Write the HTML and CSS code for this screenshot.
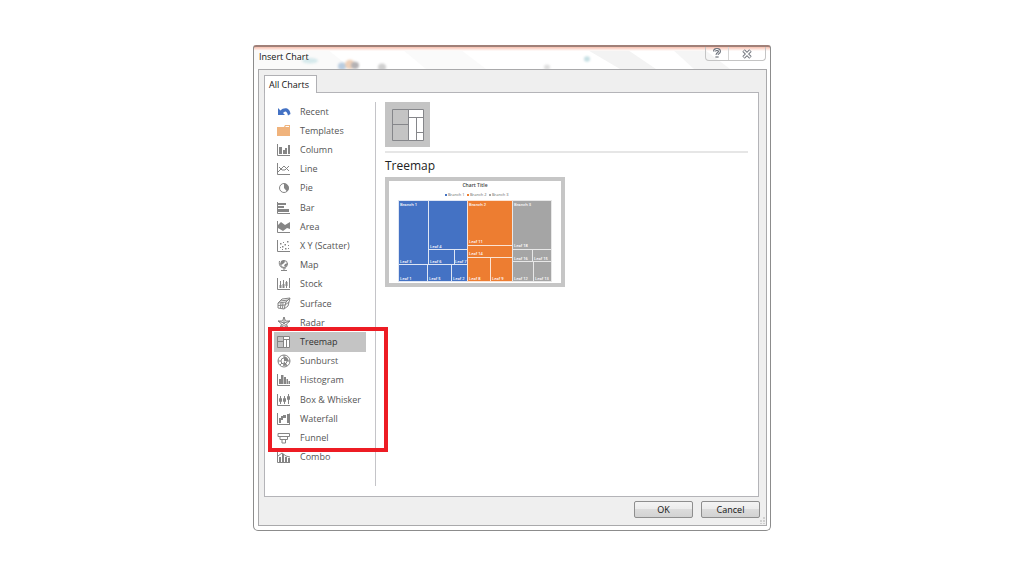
FILE: index.html
```html
<!DOCTYPE html>
<html lang="en">
  <head>
    <meta charset="utf-8">
    <title>Insert Chart</title>
    <link rel="stylesheet" href="styles.css">
  </head>
  <body>
    <div class="dialog" role="dialog" aria-labelledby="dialog-title">
      <header class="title-bar">
        <svg class="glass" viewBox="0 0 516 24" preserveAspectRatio="none" aria-hidden="true">
          <path d="M0 4H75L98 24H0z" fill="#fafafa" />
          <path d="M150 4H208L232 24H172z" fill="#fafafa" />
          <path d="M335 4H375L402 24H366z" fill="#f3f3f3" />
          <path d="M420 4H452L476 24H440z" fill="#f5f5f5" />
          <g class="smudge">
            <ellipse cx="56" cy="15" rx="8" ry="3" fill="#d5e9ec" />
            <circle cx="88" cy="21" r="4" fill="#b9cce0" />
            <circle cx="96" cy="19" r="5" fill="#efd0b8" />
            <circle cx="101" cy="20" r="4" fill="#b5b2b4" />
            <circle cx="128" cy="22" r="4" fill="#d0d0d0" />
            <circle cx="293" cy="22" r="3" fill="#e0e0e0" />
            <circle cx="333" cy="13" r="3" fill="#c6dfe4" />
          </g>
        </svg>
        <h1 class="title" id="dialog-title">Insert Chart</h1>
        <div class="caption-btns">
          <button class="caption-btn" type="button" aria-label="Help">
            <svg width="10" height="11" viewBox="0 0 10 11" fill="none">
              <path d="M2.5 3.5C2.5 .8 7.5 .8 7.5 3.5C7.5 5.2 5 5 5 7M5 8.3V9.8" stroke="#70757e" stroke-width="3" />
              <path d="M2.5 3.5C2.5 .8 7.5 .8 7.5 3.5C7.5 5.2 5 5 5 7M5 8.6V9.4" stroke="#fff" />
            </svg>
          </button>
          <button class="caption-btn close-btn" type="button" aria-label="Close">
            <svg width="12" height="10" viewBox="0 0 12 10" fill="none">
              <path d="M2.5 1.5L9.5 8.5M9.5 1.5L2.5 8.5" stroke="#777b82" stroke-width="3.4" />
              <path d="M2.8 1.8L9.2 8.2M9.2 1.8L2.8 8.2" stroke="#fff" stroke-width="1.4" />
            </svg>
          </button>
        </div>
      </header>

      <div class="client">
        <div class="tabs" role="tablist">
          <button class="tab" type="button" role="tab" aria-selected="true">All Charts</button>
        </div>

        <div class="pane">
          <nav class="chart-nav">
            <ul class="chart-list">
              <li><button class="chart-type" type="button">
                <svg class="icon" viewBox="0 0 14 14"><path d="M1 3V10H8L6 8C8 5.500 10 6 11 10.500L13.500 9C13 2.500 7 1.500 3.500 5.500z" fill="#4472c4" /></svg>
                Recent</button></li>
              <li><button class="chart-type" type="button">
                <svg class="icon" viewBox="0 0 14 14"><path d="M0 3H7L8 1H13V12H0z" fill="#f0b37c" /><path d="M8.500 2.500H12" stroke="#fff" /></svg>
                Templates</button></li>
              <li><button class="chart-type" type="button">
                <svg class="icon" viewBox="0 0 14 14"><path class="line" d="M.5 1V12.500H13" /><path class="fill" d="M2 4H5V11H2zM6 7H8V11H6zM8 5H10V11H8zM11 2H13V11H11z" /></svg>
                Column</button></li>
              <li><button class="chart-type" type="button">
                <svg class="icon" viewBox="0 0 14 14"><path class="line" d="M.5 1V12.500H13M1 10L7 4L12 9M2 5L5 8L8 8L12 4" /></svg>
                Line</button></li>
              <li><button class="chart-type" type="button">
                <svg class="icon" viewBox="0 0 14 14"><circle class="line" cx="7" cy="7" r="4.500" /><path class="fill" d="M7 7V2.500A4.500 4.500 0 0 1 10 10.500z" /></svg>
                Pie</button></li>
              <li><button class="chart-type" type="button">
                <svg class="icon" viewBox="0 0 14 14"><path class="line" d="M.5 1V12.500H13" /><path class="fill" d="M1 2H9V4H1zM1 5H7V7H1zM1 8H12V11H1z" /></svg>
                Bar</button></li>
              <li><button class="chart-type" type="button">
                <svg class="icon" viewBox="0 0 14 14"><path class="line" d="M.5 1V12.500H13" /><path class="fill" d="M1 5L4 2L8 5L13 2V9L10 8L6 11L1 8z" /></svg>
                Area</button></li>
              <li><button class="chart-type" type="button">
                <svg class="icon" viewBox="0 0 14 14"><path class="line" d="M.5 1V12.500H13" /><path class="fill" d="M3 4H4.500V5.500H3zM6 3H7V4H6zM10 2H11.500V3.500H10zM7.500 5H9V6.500H7.500zM11 6H12V7H11zM3 8H4V9H3zM5 7H6.500V8.500H5zM8 9H9.500V10.500H8zM11 9H12V10H11zM5 10H6V11H5z" /></svg>
                X Y (Scatter)</button></li>
              <li><button class="chart-type" type="button">
                <svg class="icon" viewBox="0 0 14 14"><circle class="line" cx="7" cy="6" r="3.500" /><path class="fill" d="M4 3L7 2L8 4L6 6L4 7zM8 6L11 5L9 9L7 8z" /><path class="line" d="M2.500 3C1.500 8 4 10.500 9 10M7 10V12M4 12.500H10" /></svg>
                Map</button></li>
              <li><button class="chart-type" type="button">
                <svg class="icon" viewBox="0 0 14 14"><path class="line" d="M.5 1V12.500H13M3.500 4V11M6.500 3V11M9.500 4V11M12.500 1V11" /><path class="fill" d="M5.500 7H7.500V11H5.500zM8.500 5H10.500V9H8.500zM2.500 8H4.500V11H2.500z" /></svg>
                Stock</button></li>
              <li><button class="chart-type" type="button">
                <svg class="icon" viewBox="0 0 14 14"><path class="line" d="M1 6L5 2L13 1L11 9L7 12L1 11zM1 6L9 5L13 1M9 5L7 12M1 8.500L8 8L12 5M4 6L3.500 11M3 4L11 3M6 5.500L5.500 11.500" /></svg>
                Surface</button></li>
              <li><button class="chart-type" type="button">
                <svg class="icon" viewBox="0 0 14 14"><path class="line" d="M7 1L8.500 5H13L9.500 8L11 12.500L7 9.500L3 12.500L4.500 8L1 5H5.500zM7 1V7L13 5M7 7L11 12M7 7L3 12M7 7L1 5" /></svg>
                Radar</button></li>
              <li><button class="chart-type selected" type="button" aria-current="true">
                <svg class="icon" viewBox="0 0 14 14"><path d="M6.500 1.500H12.500V12.500H6.500z" fill="#fff" /><path class="line" d="M.5 1.500H12.500V12.500H.5zM6.500 1.500V12.500M.5 6.500H6.500M6.500 4.500H12.500M9.500 4.500V12.500" /></svg>
                Treemap</button></li>
              <li><button class="chart-type" type="button">
                <svg class="icon" viewBox="0 0 14 14"><circle class="line" cx="7" cy="7" r="6" /><circle class="line" cx="7" cy="7" r="3" /><path class="line" d="M7 1V4M1 7H4M3 11L5 9M13 7H10M10 12L8.500 9.500" /><path class="fill" d="M7 2.500A4.500 4.500 0 0 1 11.500 7L7 7zM7 7L10 11.500L6 12z" /></svg>
                Sunburst</button></li>
              <li><button class="chart-type" type="button">
                <svg class="icon" viewBox="0 0 14 14"><path class="line" d="M.5 1V12.500H13" /><path class="fill" d="M2 6H4V11H2zM4 2H6.500V11H4zM7 4H9V11H7zM9.500 6H11V11H9.500zM11.500 8H13V11H11.500z" /></svg>
                Histogram</button></li>
              <li><button class="chart-type" type="button">
                <svg class="icon" viewBox="0 0 14 14"><path class="line" d="M.5 1V12.500H13M3.500 3V11M7.500 3V11M11.500 1V11M2.500 5.500H4.500V8.500H2.500zM6.500 5.500H8.500V8.500H6.500zM10.500 3.500H12.500V6.500H10.500z" /></svg>
                Box &amp; Whisker</button></li>
              <li><button class="chart-type" type="button">
                <svg class="icon" viewBox="0 0 14 14"><path class="line" d="M.5 1V12.500H13M12.500 1.500V12" /><path class="fill" d="M2 6H4V11H2zM4 4H6V8H4zM6 3H9V6H6zM10 2H12V11H10z" /></svg>
                Waterfall</button></li>
              <li><button class="chart-type" type="button">
                <svg class="icon" viewBox="0 0 14 14"><path class="line" d="M1 2.500H12.500V5.500H1zM3 5.500H10.500V8.500H3zM5 8.500H8.500V12H5z" /></svg>
                Funnel</button></li>
              <li><button class="chart-type" type="button">
                <svg class="icon" viewBox="0 0 14 14"><path class="line" d="M.5 1V12.500H13M1 6L5 3L9 6L13 7" /><path class="fill" d="M2 7H4V12H2zM5 4H7V12H5zM8 7H10V12H8zM11 8H13V12H11z" /></svg>
                Combo</button></li>
            </ul>
            <div class="highlight"></div>
          </nav>

          <main class="details">
            <div class="subtypes">
              <button class="subtype" type="button" aria-label="Treemap">
                <svg width="32" height="32" viewBox="0 0 32 32" fill="none" stroke="#85868a">
                  <path d="M16.500 .5H31.500V31.500H16.500z" fill="#fff" />
                  <path d="M.5 .5H16.500V31.500H.5zM.5 15.500H16.500M16.500 8.500H31.500M24.500 8.500V31.500M24.500 23.500H31.500" />
                </svg>
              </button>
            </div>
            <h2 class="subtype-name">Treemap</h2>
            <button class="preview" type="button" aria-label="Treemap preview">
              <svg width="172" height="102" viewBox="0 0 172 102">
                <text class="chart-title" x="86" y="6" text-anchor="middle">Chart Title</text>
                <g class="legend">
                  <path d="M56 13H58V15H56z" fill="#4472c4" /><text x="59" y="15">Branch 1</text>
                  <path d="M78 13H80V15H78z" fill="#ed7d31" /><text x="81" y="15">Branch 2</text>
                  <path d="M100 13H102V15H100z" fill="#a5a5a5" /><text x="103" y="15">Branch 3</text>
                </g>
                <g fill="#4472c4" stroke="#dfe6f4">
                  <path d="M9.500 19.500H39.500V83.500H9.500zM39.500 19.500H78.500V68.500H39.500zM39.500 68.500H65.500V83.500H39.500zM65.500 68.500H78.500V83.500H65.500zM9.500 83.500H38.500V100.500H9.500zM38.500 83.500H62.500V100.500H38.500zM62.500 83.500H78.500V100.500H62.500z" />
                </g>
                <g fill="#ed7d31" stroke="#fbe3d3">
                  <path d="M78.500 19.500H123.500V64.500H78.500zM78.500 64.500H123.500V76.500H78.500zM78.500 76.500H101.500V100.500H78.500zM101.500 76.500H123.500V100.500H101.500z" />
                </g>
                <g fill="#a5a5a5" stroke="#e8e8e8">
                  <path d="M123.500 19.500H162.500V68.500H123.500zM123.500 68.500H143.500V80.500H123.500zM143.500 68.500H162.500V80.500H143.500zM123.500 80.500H144.500V100.500H123.500zM144.500 80.500H162.500V100.500H144.500z" />
                </g>
                <g class="leaf">
                  <text x="11" y="25">Branch 1</text>
                  <text x="80" y="25">Branch 2</text>
                  <text x="125" y="25">Branch 3</text>
                  <text x="11" y="82">Leaf 3</text>
                  <text x="41" y="67">Leaf 4</text>
                  <text x="41" y="82">Leaf 6</text>
                  <text x="66" y="82">Leaf 7</text>
                  <text x="11" y="99">Leaf 1</text>
                  <text x="40" y="99">Leaf 5</text>
                  <text x="64" y="99">Leaf 2</text>
                  <text x="80" y="62">Leaf 11</text>
                  <text x="80" y="74">Leaf 14</text>
                  <text x="80" y="99">Leaf 8</text>
                  <text x="103" y="99">Leaf 9</text>
                  <text x="125" y="66">Leaf 18</text>
                  <text x="125" y="79">Leaf 16</text>
                  <text x="145" y="79">Leaf 15</text>
                  <text x="125" y="99">Leaf 12</text>
                  <text x="146" y="99">Leaf 13</text>
                </g>
              </svg>
            </button>
          </main>
        </div>

        <footer class="actions">
          <button class="btn" type="button">OK</button>
          <button class="btn" type="button">Cancel</button>
        </footer>
        <svg class="grip" width="7" height="7" viewBox="0 0 7 7" aria-hidden="true">
          <path d="M5 0H7V2H5zM5 3H7V5H5zM2 3H4V5H2zM5 6H7V7H5zM2 6H4V7H2z" fill="#cfcfcf" />
        </svg>
      </div>
    </div>
  </body>
</html>
```

FILE: styles.css
```css
* {
  box-sizing: border-box;
}

body {
  margin: 0;
  min-height: 100vh;
  display: flex;
  align-items: center;
  justify-content: center;
  background: #fff;
  color: #333;
  font-family: "Open Sans", "Noto Sans", sans-serif;
  font-size: 9px;
  line-height: 14px;
}

button {
  margin: 0;
  padding: 0;
  border: none;
  background: none;
  color: inherit;
  font: inherit;
}

svg {
  display: block;
}

.dialog {
  width: 90%;
  max-width: 518px;
  padding: 0 3px 4px 4px;
  border: 1px solid #8c8c8c;
  border-top: 2px solid #a08078;
  border-radius: 3px 3px 5px 5px;
  background: linear-gradient(#f7bfae, #fff 4px);
  position: relative;
}

/* title bar */
.title-bar {
  height: 22px;
  display: flex;
  align-items: flex-start;
  justify-content: space-between;
}

.glass {
  position: absolute;
  top: 0;
  left: 0;
  width: 100%;
  height: 22px;
}

.smudge {
  filter: blur(1px);
}

.title {
  margin: 0;
  padding: 3px 1px;
  font-size: 9px;
  font-weight: 400;
  color: #111;
  position: relative;
}

.caption-btns {
  display: flex;
  margin-right: 1px;
  border: 1px solid #c4c4c4;
  border-top: none;
  border-radius: 0 0 4px 4px;
  position: relative;
}

.caption-btn {
  width: 22px;
  height: 13px;
  display: flex;
  align-items: center;
  justify-content: center;
}

.close-btn {
  width: 37px;
  border-left: 1px solid #d4d4d4;
}

.client {
  padding: 5px 7px 7px 5px;
  border: 1px solid #a9a9ab;
  background: #efefef;
  position: relative;
}

/* tabs */
.tabs {
  display: flex;
}

.tab {
  height: 18px;
  margin-bottom: -1px;
  padding: 0 7px 0 4px;
  border: 1px solid #b0b0b4;
  border-bottom: none;
  background: #fff;
  color: #111;
  position: relative;
}

.pane {
  display: flex;
  padding: 9px 10px 10px 9px;
  border: 1px solid #b4b4b8;
  background: #fff;
}

/* chart types */
.chart-nav {
  width: 102px;
  padding-right: 9px;
  border-right: 1px solid #c4c4c8;
  flex-shrink: 0;
  position: relative;
}

.chart-list {
  height: 100%;
  min-height: 384px;
  margin: 0;
  padding: 0;
  list-style: none;
  display: grid;
  grid-template-rows: repeat(20, 1fr);
}

.chart-type {
  width: 100%;
  height: 100%;
  padding-left: 3px;
  display: flex;
  align-items: center;
  gap: 9px;
  color: #555;
  text-align: left;
  white-space: nowrap;
}

.chart-type.selected {
  background: #c4c4c4;
  color: #333;
}

.icon {
  width: 14px;
  height: 14px;
  flex-shrink: 0;
}

.line {
  fill: none;
  stroke: #858585;
}

.fill {
  fill: #858585;
}

.highlight {
  position: absolute;
  top: 225px;
  left: -6px;
  width: 120px;
  height: 125px;
  border: 4px solid #ed1c24;
  pointer-events: none;
}

/* chart preview */
.details {
  flex: 1;
  min-width: 0;
  padding-left: 9px;
}

.subtypes {
  padding-bottom: 4px;
  border-bottom: 2px solid #e6e6e6;
}

.subtype {
  width: 45px;
  height: 45px;
  display: flex;
  align-items: center;
  justify-content: center;
  background: #c4c4c4;
}

.subtype-name {
  margin: 4px 0 2px;
  font-size: 12px;
  font-weight: 400;
  line-height: 18px;
  color: #222;
}

.preview {
  display: block;
  border: 4px solid #c6c6c6;
  background: #fff;
}

.chart-title {
  font-size: 5px;
  font-weight: 600;
  fill: #444;
}

.legend {
  font-size: 4px;
  fill: #666;
}

.leaf {
  font-size: 4px;
  font-weight: 600;
  fill: #fff;
}

/* buttons */
.actions {
  display: flex;
  justify-content: flex-end;
  gap: 8px;
  padding-top: 4px;
  margin-right: -1px;
}

.btn {
  width: 59px;
  height: 17px;
  border: 1px solid #8e8e8e;
  border-radius: 2px;
  background: linear-gradient(#f4f4f4, #ebebeb 50%, #dcdcdc 50%, #d2d2d2);
  color: #111;
}

.grip {
  position: absolute;
  right: 1px;
  bottom: 1px;
}
```
